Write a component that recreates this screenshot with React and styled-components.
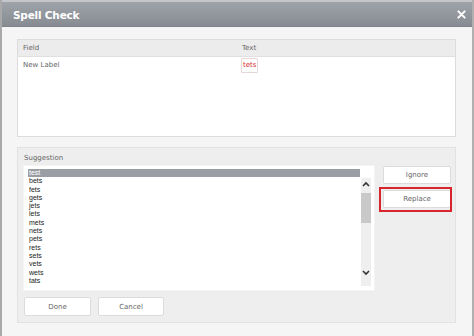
import React from "react";
import styled, { createGlobalStyle } from "styled-components";

const Global = createGlobalStyle`
  html, body { margin: 0; padding: 0; background: #f4f4f4; }
  * { box-sizing: border-box; }
`;

const Dialog = styled.div`
  width: 474px;
  height: 336px;
  display: flex;
  flex-direction: column;
  background: #f5f5f5;
  border-left: 2px solid #a9a9a9;
  border-right: 2px solid #b0b0b0;
  font-family: "DejaVu Sans", Verdana, sans-serif;
  overflow: hidden;
`;

const TitleBar = styled.div`
  height: 27px;
  flex: none;
  display: flex;
  align-items: center;
  justify-content: space-between;
  padding: 2px 6px 0 11px;
  border-top: 2px solid #c4c6c9;
  border-bottom: 1px solid #80848a;
  background: linear-gradient(#9ea3a9, #878b92);
`;

const Title = styled.div`
  color: #fff;
  font-size: 10.5px;
  font-weight: bold;
  letter-spacing: -0.2px;
`;

const Close = styled.svg`
  width: 9px;
  height: 9px;
  margin-top: -2px;
`;

const Body = styled.div`
  flex: 1;
  display: flex;
  flex-direction: column;
  gap: 10px;
  padding: 12px 16px 0 15px;
`;

const GridPanel = styled.div`
  height: 98px;
  background: #fff;
  border: 1px solid #dcdcdc;
  display: flex;
  flex-direction: column;
`;

const Row = styled.div`
  display: grid;
  grid-template-columns: 219px 1fr;
  align-items: center;
  padding: 0 5px;
  height: ${(p) => (p.$header ? "17px" : "16px")};
  background: ${(p) => (p.$header ? "#ececec" : "#fff")};
  border-bottom: ${(p) => (p.$header ? "1px solid #e0e0e0" : "none")};
  color: #666;
  font-size: 7px;
`;

const Misspelled = styled.span`
  justify-self: start;
  color: #d8302f;
  border: 1px solid #e6d6d6;
  border-radius: 1px;
  padding: 2px 1px 3px;
  margin-left: -1px;
  font-size: 7px;
`;

const SuggestPanel = styled.div`
  height: 176px;
  background: #eeeeee;
  border: 1px solid #e2e2e2;
  padding: 4px 4px 0 6px;
  display: flex;
  flex-direction: column;
`;

const Label = styled.div`
  color: #666;
  font-size: 7px;
  height: 14px;
  line-height: 12px;
`;

const SuggestRow = styled.div`
  display: flex;
  gap: 9px;
`;

const ListBox = styled.div`
  width: 350px;
  height: 124px;
  background: #fff;
  box-shadow: 0 0 0 1px #f4f4f4;
  padding: 3px 3px 0 4px;
  display: flex;
`;

const List = styled.div`
  flex: 1;
  display: flex;
  flex-direction: column;
`;

const Item = styled.div`
  height: 8.3px;
  line-height: 8.3px;
  font-family: "Liberation Sans", Arial, sans-serif;
  font-size: 7px;
  padding-left: 1px;
  color: ${(p) => (p.$selected ? "#fff" : "#222")};
  background: ${(p) => (p.$selected ? "#9a9ea4" : "transparent")};
`;

const ScrollBar = styled.div`
  width: 10px;
  margin: 9px 0 0 1px;
  height: 108px;
  display: flex;
  flex-direction: column;
  align-items: center;
  background: #efefef;
`;

const Arrow = styled.svg`
  width: 8px;
  height: 6px;
  flex: none;
  margin: ${(p) => p.$m};
`;

const Thumb = styled.div`
  width: 10px;
  height: 30px;
  background: #c9c9c9;
  flex: none;
`;

const Spacer = styled.div`
  flex: 1;
`;

const SideButtons = styled.div`
  width: 68px;
  display: flex;
  flex-direction: column;
  gap: 6px;
`;

const Button = styled.button`
  width: ${(p) => p.$w || "68px"};
  height: ${(p) => p.$h || "18px"};
  background: #fff;
  border: 1px solid #dcdcdc;
  border-radius: 2px;
  font-family: "DejaVu Sans", Verdana, sans-serif;
  font-size: 7px;
  color: #666;
  padding: 0;
  cursor: pointer;
`;

const Highlight = styled.div`
  position: relative;
  display: flex;
  &::after {
    content: "";
    position: absolute;
    top: -3px;
    left: -4px;
    right: -1px;
    bottom: -4px;
    border: 2px solid #d7242d;
    pointer-events: none;
  }
`;

const Footer = styled.div`
  display: flex;
  gap: 7px;
  margin-top: 7px;
`;

const words = ["test", "bets", "fets", "gets", "jets", "lets", "mets", "nets", "pets", "rets", "sets", "vets", "wets", "tats"];

export default function App() {
  return (
    <>
      <Global />
      <Dialog>
        <TitleBar>
          <Title>Spell Check</Title>
          <Close viewBox="0 0 10 10">
            <path d="M1.5 1.5 L8.5 8.5 M8.5 1.5 L1.5 8.5" stroke="#fff" strokeWidth="2.2" strokeLinecap="round" />
          </Close>
        </TitleBar>
        <Body>
          <GridPanel>
            <Row $header>
              <span>Field</span>
              <span>Text</span>
            </Row>
            <Row>
              <span>New Label</span>
              <Misspelled>tets</Misspelled>
            </Row>
          </GridPanel>
          <SuggestPanel>
            <Label>Suggestion</Label>
            <SuggestRow>
              <ListBox>
                <List>
                  {words.map((w, i) => (
                    <Item key={w} $selected={i === 0}>{w}</Item>
                  ))}
                </List>
                <ScrollBar>
                  <Arrow viewBox="0 0 8 6" $m="3px 0 6px">
                    <path d="M1 5 L4 2 L7 5" fill="none" stroke="#333" strokeWidth="1.6" />
                  </Arrow>
                  <Thumb />
                  <Spacer />
                  <Arrow viewBox="0 0 8 6" $m="0 0 10px">
                    <path d="M1 1 L4 4 L7 1" fill="none" stroke="#333" strokeWidth="1.6" />
                  </Arrow>
                </ScrollBar>
              </ListBox>
              <SideButtons>
                <Button>Ignore</Button>
                <Highlight>
                  <Button>Replace</Button>
                </Highlight>
              </SideButtons>
            </SuggestRow>
            <Footer>
              <Button $w="67px" $h="19px">Done</Button>
              <Button $w="66px" $h="19px">Cancel</Button>
            </Footer>
          </SuggestPanel>
        </Body>
      </Dialog>
    </>
  );
}
